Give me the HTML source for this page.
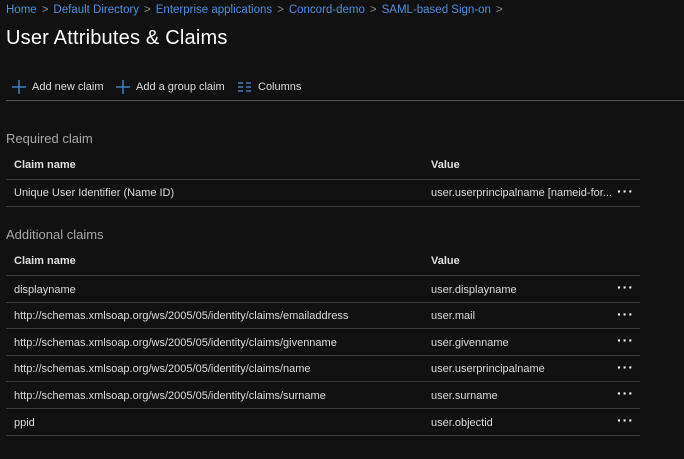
<!DOCTYPE html>
<html><head><style>
body{margin:0;width:684px;height:459px;background:#111111;font-family:"Liberation Sans",sans-serif;color:#dcdcdc;position:relative;overflow:hidden}
.a{position:absolute;white-space:nowrap}
.bc{top:4px;left:6px;font-size:11.5px;color:#4f8fe0}
.bc span{color:#888;margin:0 5px}
h1{position:absolute;top:27px;left:6px;margin:0;font-size:20px;font-weight:normal;color:#fff;letter-spacing:0.2px}
.tb{top:81px;font-size:11px;color:#ddd}
.line{position:absolute;left:6px;width:634px;height:1px;background:#3a3a3a}
.sec{font-size:13px;color:#a8a8a8;left:6px}
.hd{font-size:11px;font-weight:bold;color:#e0e0e0}
.c{font-size:11px;color:#dcdcdc}
.dots{font-size:14px;color:#fff;font-weight:bold;letter-spacing:1px;left:617px}
</style></head><body>
<div class="a bc">Home<span>&gt;</span>Default Directory<span>&gt;</span>Enterprise applications<span>&gt;</span>Concord-demo<span>&gt;</span>SAML-based Sign-on<span>&gt;</span></div>
<h1>User Attributes &amp; Claims</h1>
<svg class="a" style="left:12px;top:80px" width="14" height="14"><path d="M7 0V14M0 7H14" stroke="#4f8fe0" stroke-width="1.3"/></svg>
<div class="a tb" style="left:32px">Add new claim</div>
<svg class="a" style="left:116px;top:80px" width="14" height="14"><path d="M7 0V14M0 7H14" stroke="#4f8fe0" stroke-width="1.3"/></svg>
<div class="a tb" style="left:136px">Add a group claim</div>
<svg class="a" style="left:238px;top:82px" width="14" height="10"><path d="M0 1H5M0 5H5M0 9H5M8 1H13M8 5H13M8 9H13" stroke="#4f8fe0" stroke-width="1.2"/></svg>
<div class="a tb" style="left:258px">Columns</div>
<div class="line" style="top:100px;left:6px;width:678px;background:#555"></div>

<div class="a sec" style="top:131px">Required claim</div>
<div class="a hd" style="top:159px;left:14px">Claim name</div>
<div class="a hd" style="top:159px;left:431px">Value</div>
<div class="line" style="top:179px"></div>
<div class="a c" style="top:187px;left:14px">Unique User Identifier (Name ID)</div>
<div class="a c" style="top:187px;left:431px;width:180px;overflow:hidden">user.userprincipalname [nameid-for...</div>
<div class="a dots" style="top:183px">···</div>
<div class="line" style="top:206px"></div>

<div class="a sec" style="top:227px">Additional claims</div>
<div class="a hd" style="top:255px;left:14px">Claim name</div>
<div class="a hd" style="top:255px;left:431px">Value</div>
<div class="line" style="top:275px"></div>

<div class="a c" style="top:284px;left:14px">displayname</div><div class="a c" style="top:284px;left:431px">user.displayname</div><div class="a dots" style="top:279px">···</div>
<div class="line" style="top:302px"></div>
<div class="a c" style="top:310px;left:14px">http://schemas.xmlsoap.org/ws/2005/05/identity/claims/emailaddress</div><div class="a c" style="top:310px;left:431px">user.mail</div><div class="a dots" style="top:306px">···</div>
<div class="line" style="top:328px"></div>
<div class="a c" style="top:337px;left:14px">http://schemas.xmlsoap.org/ws/2005/05/identity/claims/givenname</div><div class="a c" style="top:337px;left:431px">user.givenname</div><div class="a dots" style="top:332px">···</div>
<div class="line" style="top:355px"></div>
<div class="a c" style="top:363px;left:14px">http://schemas.xmlsoap.org/ws/2005/05/identity/claims/name</div><div class="a c" style="top:363px;left:431px">user.userprincipalname</div><div class="a dots" style="top:359px">···</div>
<div class="line" style="top:381px"></div>
<div class="a c" style="top:390px;left:14px">http://schemas.xmlsoap.org/ws/2005/05/identity/claims/surname</div><div class="a c" style="top:390px;left:431px">user.surname</div><div class="a dots" style="top:385px">···</div>
<div class="line" style="top:408px"></div>
<div class="a c" style="top:417px;left:14px">ppid</div><div class="a c" style="top:417px;left:431px">user.objectid</div><div class="a dots" style="top:412px">···</div>
<div class="line" style="top:435px"></div>
</body></html>
